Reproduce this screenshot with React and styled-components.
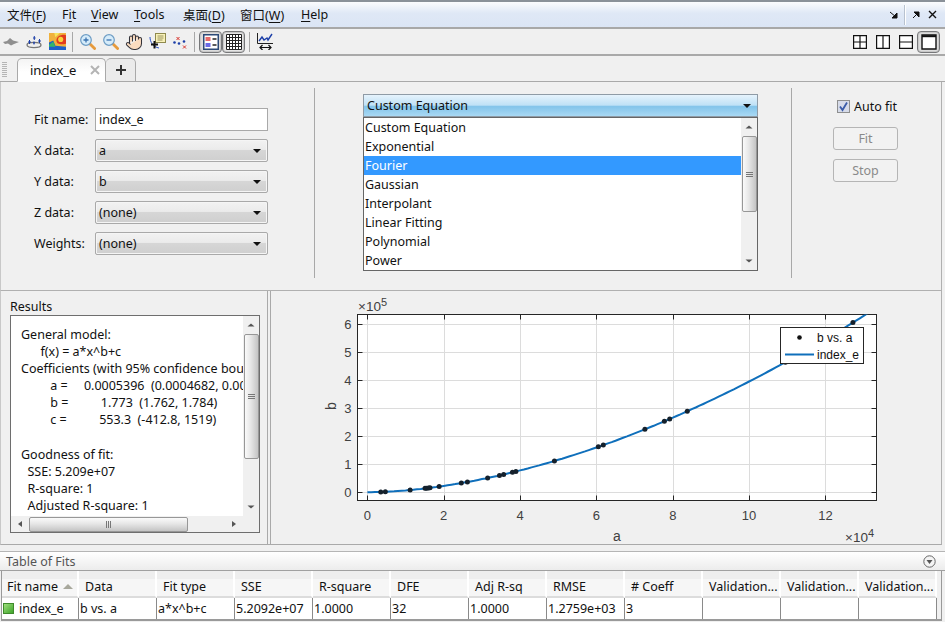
import React from "react";
import styled, {createGlobalStyle} from "styled-components";
import {Hand} from "lucide-react";

const UI_FONT = `"Noto Sans", "Noto Sans CJK SC", sans-serif`;

const GlobalStyle = createGlobalStyle`
  html, body {
    margin: 0;
    padding: 0;
    background: #f0f0f0;
    overflow: hidden;
  }
  * { box-sizing: border-box; }
`;

const Page = styled.div`
  width: 945px;
  height: 622px;
  display: flex;
  flex-direction: column;
  font-family: ${UI_FONT};
  font-size: 12.5px;
  color: #111;
  background: #f0f0f0;
  border-top: 2px solid #8a9199;
  overflow: hidden;
`;

/* menu bar */
const MenuBar = styled.div`
  height: 27px;
  flex: none;
  display: flex;
  align-items: center;
  padding: 0 8px 0 7px;
  background: linear-gradient(#fbfcfe 0%, #dfe8f6 45%, #dbe5f5 100%);
  border-bottom: 2px solid #a8a8a8;
`;

const MenuItem = styled.span`
  width: ${(p) => p.$width}px;
  flex: none;
  white-space: nowrap;
  u { text-underline-offset: 2px; }
`;

const WindowControls = styled.div`
  margin-left: auto;
  display: flex;
  align-items: center;
  height: 100%;
`;

const ControlDivider = styled.div`
  width: 1px;
  height: 20px;
  margin: 0 6px 0 7px;
  background: #fff;
  box-shadow: -1px 0 0 #b8c2d0;
`;

/* toolbar */
const Toolbar = styled.div`
  height: 27px;
  flex: none;
  display: flex;
  align-items: center;
  padding: 0 5px 0 3px;
  background: #f0f0f0;
  border-bottom: 2px solid #a9a9a9;
`;

const ToolIcon = styled.svg`
  width: ${(p) => p.$size || 16}px;
  height: ${(p) => p.$size || 16}px;
  flex: none;
  margin-left: ${(p) => p.$gap || 0}px;
  display: block;
`;

const ToolDivider = styled.div`
  width: 1px;
  height: 20px;
  flex: none;
  margin: 0 ${(p) => p.$after || 7}px 0 ${(p) => p.$before || 7}px;
  background: #a8a8a8;
`;

const ToggleButton = styled.div`
  width: 23px;
  height: 22px;
  flex: none;
  display: flex;
  align-items: center;
  justify-content: center;
  border: 1px solid #77787a;
  border-radius: 4px;
  background: ${(p) => (p.$light ? "#e6e6e6" : "#dcdcdc")};
  box-shadow: inset 0 0 0 1px #c9c9c9;
`;

const Spacer = styled.div`
  flex: 1;
`;

/* tabs */
const TabStrip = styled.div`
  height: 26px;
  flex: none;
  display: flex;
  align-items: flex-end;
  border-bottom: 1px solid #a9a9a9;
  background: #f0f0f0;
`;

const Grip = styled.div`
  width: 5px;
  height: 15px;
  margin: 0 10px 4px 2px;
  background: repeating-linear-gradient(#b5b5b5 0 1px, #f0f0f0 1px 2px);
`;

const Tab = styled.div`
  width: ${(p) => p.$width}px;
  height: 24px;
  display: flex;
  align-items: center;
  justify-content: ${(p) => (p.$active ? "flex-start" : "center")};
  padding-left: ${(p) => (p.$active ? 12 : 0)}px;
  margin-bottom: -1px;
  border: 1px solid #a9a9a9;
  border-left-width: ${(p) => (p.$active ? 1 : 0)}px;
  border-radius: 5px 5px 0 0;
  border-bottom: ${(p) => (p.$active ? "1px solid #fff" : "1px solid #a9a9a9")};
  background: ${(p) => (p.$active ? "linear-gradient(#f4f4f4, #fff 60%)" : "#ebebeb")};
  font-size: 13px;
`;

const TabClose = styled.svg`
  width: 10px;
  height: 10px;
  margin-left: 14px;
`;

/* fit settings */
const FitPanel = styled.div`
  height: 209px;
  flex: none;
  display: flex;
  margin-right: 3px;
  padding: 6px 0 12px 0;
  border-left: 1px solid #c8c8c8;
  border-right: 1px solid #b0b0b0;
  border-bottom: 1px solid #b0b0b0;
  background: #f0f0f0;
`;

const FormSection = styled.div`
  width: 314px;
  flex: none;
  padding: 20px 0 0 33px;
  border-right: 1px solid #a8a8a8;
`;

const FormGrid = styled.div`
  display: grid;
  grid-template-columns: 61px 173px;
  grid-auto-rows: 23px;
  row-gap: 8px;
  align-items: center;
`;

const FieldLabel = styled.label`
  white-space: nowrap;
`;

const TextInput = styled.div`
  height: 23px;
  display: flex;
  align-items: center;
  padding-left: 3px;
  background: #fff;
  border: 1px solid #a9a9a9;
`;

const Select = styled.div`
  height: 23px;
  display: flex;
  align-items: center;
  justify-content: space-between;
  padding: 0 6px 0 3px;
  border: 1px solid #a9a9a9;
  border-radius: 2px;
  background: linear-gradient(#f2f2f2 0%, #ebebeb 45%, #d6d6d6 50%, #cfcfcf 100%);
  box-shadow: inset 0 0 0 1px #f5f5f5;
`;

const Caret = styled.span`
  width: 0;
  height: 0;
  border-left: 4px solid transparent;
  border-right: 4px solid transparent;
  border-top: 4px solid #111;
`;

const TypeSection = styled.div`
  width: 477px;
  flex: none;
  padding: 6px 0 0 48px;
  border-right: 1px solid #a8a8a8;
`;

const TypeSelect = styled.div`
  width: 395px;
  height: 23px;
  display: flex;
  align-items: center;
  justify-content: space-between;
  padding: 0 6px 0 3px;
  border: 1px solid #8f9ba6;
  background: linear-gradient(#e6f3fc 0%, #bfe1f6 48%, #83c4ea 55%, #a9d9f4 100%);
`;

const TypeList = styled.div`
  width: 395px;
  height: 154px;
  display: flex;
  border: 1px solid #666;
  background: #fff;
`;

const TypeRows = styled.div`
  flex: 1;
`;

const TypeRow = styled.div`
  height: 19px;
  display: flex;
  align-items: center;
  padding-left: 1px;
  color: ${(p) => (p.$selected ? "#fff" : "#111")};
  background: ${(p) => (p.$selected ? "#3399ff" : "transparent")};
`;

const ActionSection = styled.div`
  flex: 1;
  display: flex;
  flex-direction: column;
  align-items: flex-start;
  padding: 12px 0 0 41px;
`;

const AutoFit = styled.div`
  display: flex;
  align-items: center;
  gap: 4px;
  height: 13px;
  margin: 0 0 14px 4px;
`;

const CheckBox = styled.div`
  width: 13px;
  height: 13px;
  display: flex;
  align-items: center;
  justify-content: center;
  border: 1px solid #8e8f8f;
  background: #d6dbe9;
`;

const ActionButton = styled.div`
  width: 65px;
  height: 23px;
  display: flex;
  align-items: center;
  justify-content: center;
  margin-bottom: 9px;
  color: #8a8a8a;
  border: 1px solid #b5b5b5;
  border-radius: 3px;
  background: #f2f2f2;
`;

/* scroll bars */
const ScrollTrack = styled.div`
  display: flex;
  flex-direction: ${(p) => (p.$horizontal ? "row" : "column")};
  flex: none;
  align-items: center;
  justify-content: space-between;
  ${(p) => (p.$horizontal ? "height: 16px;" : "width: 16px;")}
  background: #f0f0f0;
`;

const ScrollArrow = styled.svg`
  width: ${(p) => (p.$horizontal ? 18 : 16)}px;
  height: ${(p) => (p.$horizontal ? 16 : 18)}px;
  flex: none;
`;

const ScrollThumb = styled.div`
  ${(p) =>
    p.$horizontal
      ? `width: ${p.$size}px; height: 15px; background: linear-gradient(#fafafa, #e6e6e6 45%, #c4c4c4);`
      : `height: ${p.$size}px; width: 15px; background: linear-gradient(90deg, #fafafa, #e6e6e6 45%, #c4c4c4);`}
  flex: none;
  display: flex;
  flex-direction: ${(p) => (p.$horizontal ? "row" : "column")};
  align-items: center;
  justify-content: center;
  gap: 1px;
  border: 1px solid #979797;
  border-radius: 2px;
`;

const ThumbLine = styled.div`
  background: #777;
  ${(p) => (p.$horizontal ? "width: 1px; height: 7px;" : "height: 1px; width: 7px;")}
`;

const ScrollFill = styled.div`
  flex: 1;
`;

/* results + plot */
const MiddleRow = styled.div`
  height: 254px;
  flex: none;
  display: flex;
  margin-right: 3px;
  border-left: 1px solid #c8c8c8;
  border-right: 1px solid #b0b0b0;
  border-bottom: 1px solid #a9a9a9;
`;

const ResultsPanel = styled.div`
  width: 267px;
  flex: none;
  padding: 9px 0 0 9px;
  border-right: 1px solid #a9a9a9;
`;

const ResultsTitle = styled.div`
  height: 15px;
  line-height: 14px;
`;

const ResultsBox = styled.div`
  width: 250px;
  height: 218px;
  display: grid;
  grid-template-columns: 1fr 16px;
  grid-template-rows: 1fr 16px;
  border: 1px solid #6e6e6e;
  background: #fff;
`;

const ResultsText = styled.div`
  overflow: hidden;
  padding: 10px 0 0 10px;
  white-space: pre;
`;

const ResultLine = styled.div`
  height: 17.1px;
  line-height: 17.1px;
`;

const Corner = styled.div`
  background: #f0f0f0;
`;

const PlotPanel = styled.div`
  flex: 1;
  margin-left: 2px;
  border-left: 1px solid #a9a9a9;
`;

const PlotSvg = styled.svg`
  display: block;
  font-family: "Liberation Sans", Arial, sans-serif;
`;

/* table of fits */
const TablePanel = styled.div`
  flex: none;
  margin-top: 6px;
  border-top: 1px solid #b5b5b5;
`;

const TableTitle = styled.div`
  height: 19px;
  display: flex;
  align-items: center;
  justify-content: space-between;
  padding: 0 9px 0 6px;
  color: #555;
  background: linear-gradient(#fff, #ececec);
  border-bottom: 1px solid #a0a0a0;
`;

const TableGrid = styled.div`
  width: 941px;
  margin-left: 1px;
  display: grid;
  grid-template-columns: 77px repeat(11, 78px);
  border-left: 1px solid #999;
  border-right: 1px solid #999;
  border-bottom: 2px solid #9a9a9a;
`;

const HeadCell = styled.div`
  height: 27px;
  display: flex;
  align-items: center;
  gap: 5px;
  padding: 6px 0 0 ${(p) => (p.$first ? 5 : 6)}px;
  white-space: nowrap;
  overflow: hidden;
  background: linear-gradient(#eeeeee 0 8px, #f6f6f6 8px);
  border-right: 2px solid #fff;
  border-bottom: 2px solid #dcdcdc;
`;

const SortMark = styled.span`
  width: 0;
  height: 0;
  border-left: 5px solid transparent;
  border-right: 5px solid transparent;
  border-bottom: 5px solid #a8a89c;
`;

const BodyCell = styled.div`
  height: 21px;
  display: flex;
  align-items: center;
  gap: 5px;
  padding-left: 1px;
  white-space: nowrap;
  overflow: hidden;
  background: #fff;
  border-right: 1px solid #8a8a8a;
`;

const FitSwatch = styled.span`
  width: 11px;
  height: 11px;
  border: 1px solid #3f8a2c;
  background: linear-gradient(135deg, #9ede7c, #3ea42a);
`;

const FIT_TYPES = ["Custom Equation", "Exponential", "Fourier", "Gaussian", "Interpolant", "Linear Fitting", "Polynomial", "Power"];

const RESULT_LINES = [
  "General model:",
  "      f(x) = a*x^b+c",
  "Coefficients (with 95% confidence bounds):",
  "         a =     0.0005396  (0.0004682, 0.0006109)",
  "         b =          1.773  (1.762, 1.784)",
  "         c =          553.3  (-412.8, 1519)",
  " ",
  "Goodness of fit:",
  "  SSE: 5.209e+07",
  "  R-square: 1",
  "  Adjusted R-square: 1",
];

const HEADERS = ["Fit name", "Data", "Fit type", "SSE", "R-square", "DFE", "Adj R-sq", "RMSE", "# Coeff", "Validation...", "Validation...", "Validation..."];
const ROW = ["index_e", "b vs. a", "a*x^b+c", "5.2092e+07", "1.0000", "32", "1.0000", "1.2759e+03", "3", "", "", ""];

const POINTS = [0.35, 0.47, 1.12, 1.51, 1.55, 1.6, 1.64, 1.88, 2.46, 2.62, 3.15, 3.46, 3.57, 3.8, 3.89, 4.9, 6.05, 6.18, 7.27, 7.78, 7.92, 8.38, 10.95, 12.72];
const X_TICKS = [0, 2, 4, 6, 8, 10, 12];
const Y_TICKS = [0, 1, 2, 3, 4, 5, 6];

const AX = {left: 357.5, right: 876.5, top: 314.5, bottom: 500.5};
const px = (a) => 367.4 + a * 38.17;
const py = (v) => 492.4 - v * 28;
const model = (a) => (0.0005396 * Math.pow(a * 1e4, 1.773) + 553.3) / 1e5;

const curvePath = () => {
  let d = "";
  for (let a = 0; a <= 13.8; a += 0.1) {
    d += `${d ? "L" : "M"}${px(a).toFixed(1)} ${py(model(a)).toFixed(1)}`;
  }
  return d;
};

function Scrollbar({horizontal, size}) {
  const grips = [0, 1, 2];
  return (
    <ScrollTrack $horizontal={horizontal}>
      <ScrollArrow $horizontal={horizontal} viewBox="0 0 16 16">
        <path d={horizontal ? "M6 8l4-3v6z" : "M4.5 9.5L8 6.5l3.5 3z"} fill="#555" />
      </ScrollArrow>
      <ScrollThumb $horizontal={horizontal} $size={size}>
        {grips.map((g) => <ThumbLine key={g} $horizontal={horizontal} />)}
      </ScrollThumb>
      <ScrollFill />
      <ScrollArrow $horizontal={horizontal} viewBox="0 0 16 16">
        <path d={horizontal ? "M6 5l4 3-4 3z" : "M4.5 6.5h7L8 9.5z"} fill="#555" />
      </ScrollArrow>
    </ScrollTrack>
  );
}

const Magnifier = ({minus, gap}) => (
  <ToolIcon $gap={gap} viewBox="0 0 16 16">
    <path d="M10 10l4.6 4.6" stroke="#e69a3c" strokeWidth="2.8" strokeLinecap="round" />
    <circle cx="6" cy="6" r="5.3" fill="#d6ecfa" stroke="#6d9cc4" strokeWidth="1.2" />
    <path d={minus ? "M3.5 6h5" : "M3.5 6h5M6 3.5v5"} stroke="#3a72b0" strokeWidth="1.3" />
  </ToolIcon>
);

function ToolbarIcons() {
  return (
    <>
      <ToolIcon viewBox="0 0 16 16">
        <path d="M0 8l4-1 3-3 3 2.5 6 1.5-5 2-3 1.5-3-2-3 .5z" fill="#8f8f8f" />
      </ToolIcon>
      <ToolIcon $gap={7} viewBox="0 0 16 16">
        <ellipse cx="8" cy="11" rx="7" ry="2.6" fill="none" stroke="#777" strokeWidth="1.3" />
        <path d="M2 8h3M3.5 6v4M7 4h2.6M8.3 2v4M12 7h3M13.5 5v4M7 9h2M8 7.5v3" stroke="#1c3fa8" strokeWidth="1" />
      </ToolIcon>
      <ToolIcon $gap={7} $size={17} viewBox="0 0 16 16">
        <rect width="16" height="16" fill="#f0b13c" />
        <path d="M0 9l4-2 2 5 10 1v3H0z" fill="#1f5fc9" />
        <path d="M0 11l4-3 2 5H0z" fill="#35b56a" />
        <path d="M7 7c0-4 5-6 9-5v8c-4 1-9 1-9-3z" fill="#e23a1e" />
        <circle cx="11" cy="6" r="2.4" fill="#f7d23c" />
        <path d="M5 0h5L6 4z" fill="#f6e45c" />
      </ToolIcon>
      <ToolDivider $before={6} $after={7} />
      <Magnifier />
      <Magnifier minus gap={7} />
      <Hand size={18} strokeWidth={1.4} fill="#fbdcc0" color="#33333a" style={{marginLeft: 6, flex: "none"}} />
      <ToolIcon $gap={6} $size={17} viewBox="0 0 17 17">
        <rect x="6.5" y=".5" width="10" height="9" fill="#f8f1b8" stroke="#8f8a4e" />
        <path d="M8.5 3h6M8.5 5h6M8.5 7h5" stroke="#9a9460" />
        <path d="M1 4c0 5 3 10 9 11" fill="none" stroke="#2a52c8" strokeWidth="1" />
        <path d="M2 11.5h7M5.5 8v7.5" stroke="#111" strokeWidth="2" />
      </ToolIcon>
      <ToolIcon $gap={7} $size={14} viewBox="0 0 14 14">
        <circle cx="1.5" cy="7.5" r="1.3" fill="#1c3fa8" />
        <circle cx="6" cy="8.5" r="1.3" fill="#1c3fa8" />
        <circle cx="11" cy="6.5" r="1.3" fill="#1c3fa8" />
        <path d="M3.5 2l3 3M6.5 2l-3 3M10 10.5l3 3M13 10.5l-3 3" stroke="#d8322a" strokeWidth="1" />
      </ToolIcon>
      <ToolDivider $before={7} $after={4} />
      <ToggleButton>
        <ToolIcon $size={16} viewBox="0 0 16 16">
          <rect x=".75" y=".75" width="14.5" height="14.5" fill="#fff" stroke="#2c4a78" strokeWidth="1.5" />
          <rect x="2.5" y="3" width="5" height="4" fill="#e86a6a" />
          <rect x="2.5" y="9" width="5" height="4" fill="#6a6ae8" />
          <path d="M9.5 5h4M9.5 11h4" stroke="#222" strokeWidth="1.3" />
        </ToolIcon>
      </ToggleButton>
      <ToggleButton $light>
        <ToolIcon $size={16} viewBox="0 0 16 16">
          <path d="M.5.5h15v15H.5zM3.5.5v15M6.5.5v15M9.5.5v15M12.5.5v15M.5 3.5h15M.5 6.5h15M.5 9.5h15M.5 12.5h15" fill="#fff" stroke="#222" strokeWidth="1" />
        </ToolIcon>
      </ToggleButton>
      <ToolDivider $before={4} $after={7} />
      <ToolIcon $size={17} viewBox="0 0 17 17">
        <path d="M.5 0v10.5H16" fill="none" stroke="#222" />
        <path d="M2 8l3-4 2 3 3-2 1 2 4-6" fill="none" stroke="#1c3fa8" strokeWidth="1.4" />
        <path d="M3 14.5h11M5.5 12l-2.5 2.5 2.5 2.5M11.5 12l2.5 2.5-2.5 2.5" fill="none" stroke="#111" strokeWidth="1.2" />
      </ToolIcon>
    </>
  );
}

const LayoutIcon = ({d, gap}) => (
  <ToolIcon $gap={gap} $size={14} viewBox="0 0 14 14">
    <path d={d} fill="#fff" stroke="#111" strokeWidth="1.2" />
  </ToolIcon>
);

function Plot() {
  return (
    <PlotSvg width="670" height="253" viewBox="271 291 670 253">
      <defs>
        <clipPath id="axes-clip">
          <rect x={AX.left} y={AX.top} width={AX.right - AX.left} height={AX.bottom - AX.top} />
        </clipPath>
      </defs>
      <rect x={AX.left} y={AX.top} width={AX.right - AX.left} height={AX.bottom - AX.top} fill="#fff" />
      {X_TICKS.map((t) => (
        <path key={t} d={`M${Math.round(px(t)) + 0.5} ${AX.top}V${AX.bottom}`} stroke="#dcdcdc" />
      ))}
      {Y_TICKS.map((t) => (
        <path key={t} d={`M${AX.left} ${Math.round(py(t)) + 0.5}H${AX.right}`} stroke="#dcdcdc" />
      ))}
      <rect x={AX.left} y={AX.top} width={AX.right - AX.left} height={AX.bottom - AX.top} fill="none" stroke="#262626" />
      {X_TICKS.map((t) => {
        const x = Math.round(px(t)) + 0.5;
        return <path key={t} d={`M${x} ${AX.top}v5M${x} ${AX.bottom}v-5`} stroke="#262626" />;
      })}
      {Y_TICKS.map((t) => {
        const y = Math.round(py(t)) + 0.5;
        return <path key={t} d={`M${AX.left} ${y}h5M${AX.right} ${y}h-5`} stroke="#262626" />;
      })}
      <g clipPath="url(#axes-clip)">
        <path d={curvePath()} fill="none" stroke="#0f6fbb" strokeWidth="2" />
        {POINTS.map((a) => (
          <circle key={a} cx={px(a)} cy={py(model(a))} r="2.5" fill="#15212c" />
        ))}
      </g>
      <g fontSize="13" fill="#404040" textAnchor="middle">
        {X_TICKS.map((t) => (
          <text key={t} x={px(t)} y="520">{t}</text>
        ))}
        <text x="617" y="541" fontSize="14">a</text>
        <text x="0" y="0" fontSize="14" transform="translate(336 406) rotate(-90)">b</text>
      </g>
      <g fontSize="13" fill="#404040" textAnchor="end">
        {Y_TICKS.map((t) => (
          <text key={t} x="351.5" y={py(t) + 4.5}>{t}</text>
        ))}
      </g>
      <text x="358" y="311" fontSize="13.5" fill="#404040">×10<tspan dy="-5" fontSize="11">5</tspan></text>
      <text x="845" y="542" fontSize="13.5" fill="#404040">×10<tspan dy="-5" fontSize="11">4</tspan></text>
      <rect x="780.5" y="327.5" width="83" height="36" fill="#fff" stroke="#262626" />
      <circle cx="799.5" cy="337.5" r="2.3" fill="#111" />
      <path d="M785 354.5h29" stroke="#0f6fbb" strokeWidth="2" />
      <text x="817" y="342" fontSize="12" fill="#111">b vs. a</text>
      <text x="817" y="359" fontSize="12" fill="#111">index_e</text>
    </PlotSvg>
  );
}

export default function App() {
  return (
    <Page>
      <GlobalStyle />
      <MenuBar>
        <MenuItem $width={55}>文件(<u>F</u>)</MenuItem>
        <MenuItem $width={29}>F<u>i</u>t</MenuItem>
        <MenuItem $width={43}><u>V</u>iew</MenuItem>
        <MenuItem $width={49}><u>T</u>ools</MenuItem>
        <MenuItem $width={57}>桌面(<u>D</u>)</MenuItem>
        <MenuItem $width={61}>窗口(<u>W</u>)</MenuItem>
        <MenuItem $width={30}><u>H</u>elp</MenuItem>
        <WindowControls>
          <ToolIcon $size={8} viewBox="0 0 8 8">
            <path d="M0 1l6 5M7 2v5H2z" fill="#111" stroke="#111" />
          </ToolIcon>
          <ControlDivider />
          <ToolIcon $size={8} viewBox="0 0 8 8">
            <path d="M1 7l5-5M2 1h5v5z" fill="#111" stroke="#111" />
          </ToolIcon>
          <ToolIcon $size={9} $gap={8} viewBox="0 0 9 9">
            <path d="M1 1l7 7M8 1l-7 7" stroke="#111" strokeWidth="1.4" />
          </ToolIcon>
        </WindowControls>
      </MenuBar>

      <Toolbar>
        <ToolbarIcons />
        <Spacer />
        <LayoutIcon d="M.6.6h12.8v12.8H.6zM7 .6v12.8M.6 7h12.8" />
        <LayoutIcon gap={9} d="M.6.6h12.8v12.8H.6zM7 .6v12.8" />
        <LayoutIcon gap={9} d="M.6.6h12.8v12.8H.6zM.6 7h12.8" />
        <ToggleButton style={{marginLeft: 4}}>
          <ToolIcon $size={16} viewBox="0 0 16 16">
            <path d="M1 1h14v14H1z" fill="#fff" stroke="#111" strokeWidth="1.4" />
            <path d="M1 2.2h14" stroke="#111" strokeWidth="2" />
          </ToolIcon>
        </ToggleButton>
      </Toolbar>

      <TabStrip>
        <Grip />
        <Tab $active $width={89}>
          index_e
          <TabClose viewBox="0 0 10 10">
            <path d="M1 1l8 8M9 1l-8 8" stroke="#b4b4b4" strokeWidth="2" />
          </TabClose>
        </Tab>
        <Tab $width={30}>
          <svg width="12" height="12" viewBox="0 0 12 12">
            <path d="M6 1v10M1 6h10" stroke="#333" strokeWidth="2" />
          </svg>
        </Tab>
      </TabStrip>

      <FitPanel>
        <FormSection>
          <FormGrid>
            <FieldLabel>Fit name:</FieldLabel>
            <TextInput>index_e</TextInput>
            <FieldLabel>X data:</FieldLabel>
            <Select>a<Caret /></Select>
            <FieldLabel>Y data:</FieldLabel>
            <Select>b<Caret /></Select>
            <FieldLabel>Z data:</FieldLabel>
            <Select>(none)<Caret /></Select>
            <FieldLabel>Weights:</FieldLabel>
            <Select>(none)<Caret /></Select>
          </FormGrid>
        </FormSection>
        <TypeSection>
          <TypeSelect>Custom Equation<Caret /></TypeSelect>
          <TypeList>
            <TypeRows>
              {FIT_TYPES.map((t) => (
                <TypeRow key={t} $selected={t === "Fourier"}>{t}</TypeRow>
              ))}
            </TypeRows>
            <Scrollbar size={76} />
          </TypeList>
        </TypeSection>
        <ActionSection>
          <AutoFit>
            <CheckBox>
              <svg width="11" height="11" viewBox="0 0 11 11">
                <path d="M2 5.5l2.5 3.5L9 1.5" fill="none" stroke="#3a5ba8" strokeWidth="1.8" />
              </svg>
            </CheckBox>
            Auto fit
          </AutoFit>
          <ActionButton>Fit</ActionButton>
          <ActionButton>Stop</ActionButton>
        </ActionSection>
      </FitPanel>

      <MiddleRow>
        <ResultsPanel>
          <ResultsTitle>Results</ResultsTitle>
          <ResultsBox>
            <ResultsText>
              {RESULT_LINES.map((line, i) => (
                <ResultLine key={i}>{line}</ResultLine>
              ))}
            </ResultsText>
            <Scrollbar size={125} />
            <Scrollbar horizontal size={159} />
            <Corner />
          </ResultsBox>
        </ResultsPanel>
        <PlotPanel>
          <Plot />
        </PlotPanel>
      </MiddleRow>

      <TablePanel>
        <TableTitle>
          Table of Fits
          <svg width="13" height="13" viewBox="0 0 13 13">
            <circle cx="6.5" cy="6.5" r="5.7" fill="#f4f4f4" stroke="#666" />
            <path d="M3.5 5h6l-3 4z" fill="#555" />
          </svg>
        </TableTitle>
        <TableGrid>
          {HEADERS.map((h, i) => (
            <HeadCell key={i} $first={i === 0}>
              {h}
              {i === 0 ? <SortMark /> : null}
            </HeadCell>
          ))}
          {ROW.map((c, i) => (
            <BodyCell key={i}>
              {i === 0 ? <FitSwatch /> : null}
              {c}
            </BodyCell>
          ))}
        </TableGrid>
      </TablePanel>
    </Page>
  );
}
